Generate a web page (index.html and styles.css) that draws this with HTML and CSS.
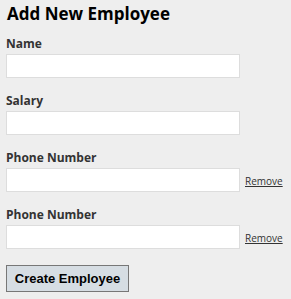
FILE: index.html
```html
<!DOCTYPE html>
<html lang="en">
<head>
    <meta charset="UTF-8">
    <title>Add New Employee</title>
    <link rel="stylesheet" href="styles.css">
</head>
<body>
    <form class="employee-form">
        <h1>Add New Employee</h1>

        <div class="field">
            <label for="name">Name</label>
            <input type="text" id="name">
        </div>

        <div class="field">
            <label for="salary">Salary</label>
            <input type="text" id="salary">
        </div>

        <div class="field">
            <label for="phone1">Phone Number</label>
            <div class="phone-row">
                <input type="text" id="phone1">
                <a href="#" class="remove">Remove</a>
            </div>
        </div>

        <div class="field">
            <label for="phone2">Phone Number</label>
            <div class="phone-row">
                <input type="text" id="phone2">
                <a href="#" class="remove">Remove</a>
            </div>
        </div>

        <button type="button" class="create">Create Employee</button>
    </form>
</body>
</html>
```

FILE: styles.css
```css
body {
    margin: 0;
    padding: 0 6px;
    background-color: #eeeeee;
    font-family: 'Open Sans', sans-serif;
    color: #333;
}
h1 {
    margin: 0;
    padding-top: 3px;
    padding-left: 1px;
    font-size: 17px;
    line-height: 22px;
    color: #000;
}
.field {
    display: flex;
    flex-direction: column;
    margin-top: 15px;
}
.field:first-of-type {
    margin-top: 11px;
}
label {
    font-size: 12px;
    font-weight: bold;
    line-height: 16px;
    margin-bottom: 2px;
}
input {
    width: 234px;
    height: 24px;
    box-sizing: border-box;
    margin: 0;
    border: 1px solid #dddddd;
    background: #fff;
}
.phone-row {
    display: flex;
    align-items: center;
}
.remove {
    margin-left: 5px;
    margin-top: 2px;
    font-size: 10px;
    color: #333;
}
.create {
    margin-top: 16px;
    width: 123px;
    height: 27px;
    background-color: #d6dde3;
    border: 1px solid #777;
    font-family: 'Liberation Sans', Arial, sans-serif;
    font-weight: bold;
    font-size: 13px;
    color: #000;
    padding: 0;
}
```
